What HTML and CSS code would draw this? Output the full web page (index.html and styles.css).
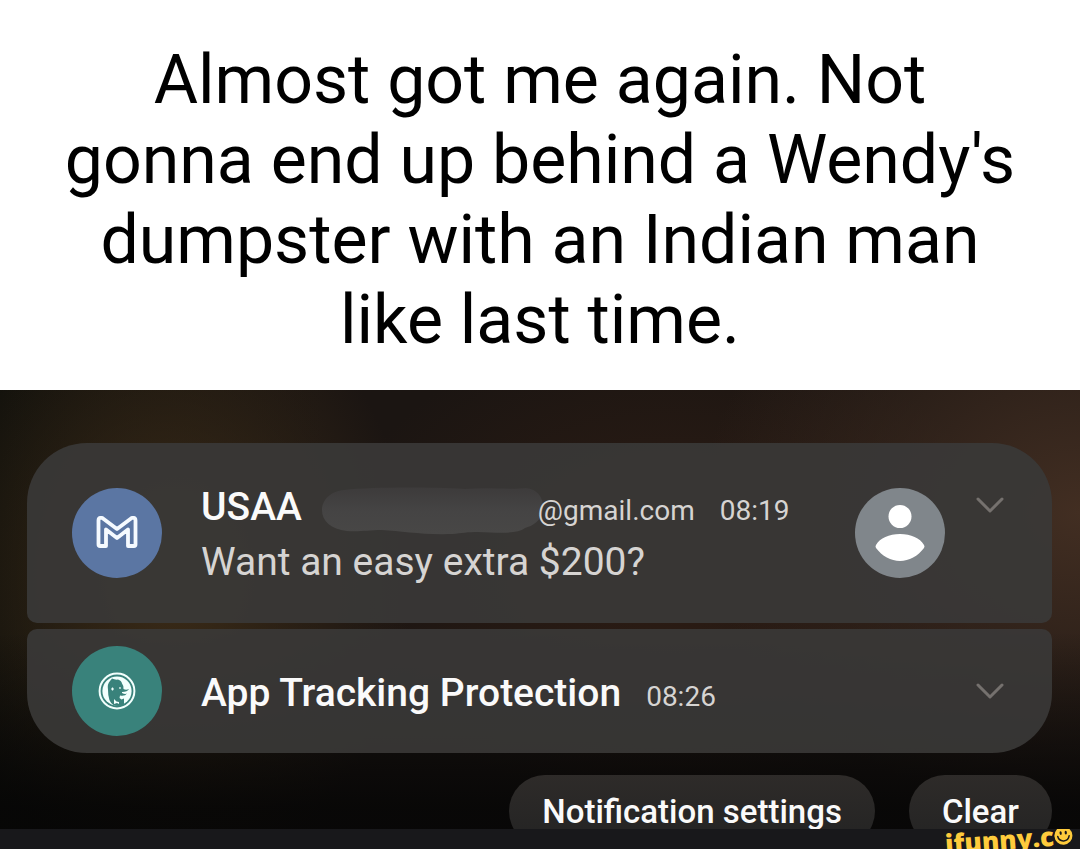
FILE: index.html
```html
<!DOCTYPE html>
<html lang="en">
<head>
  <meta charset="UTF-8">
  <title>Almost got me again</title>
  <link rel="stylesheet" href="styles.css">
</head>
<body>

  <h1 class="caption">Almost got me again. Not gonna end up behind a Wendy's dumpster with an Indian man like last time.</h1>

  <!-- Notification shade -->
  <main class="shade">
    <div class="cards">

      <article class="card">
        <svg class="app-icon" viewBox="0 0 90 90" aria-hidden="true">
          <circle cx="45" cy="45" r="45" fill="#5b76a3"/>
          <path d="M26.500 56.500V32.500Q26.500 30.200 28.200 29.800L30 29.800 45 41 60 29.800 61.800 29.800Q63.500 30.200 63.500 32.500V56.500Q63.500 58 62 58H56V41.500L45 50 34 41.500V58H28Q26.500 58 26.500 56.500Z" fill="none" stroke="#f5faff" stroke-width="3.800" stroke-linejoin="round"/>
        </svg>
        <div class="content">
          <div class="line">
            <h2 class="title">USAA</h2>
            <svg class="smear" viewBox="0 0 222 48" aria-hidden="true">
              <defs>
                <linearGradient id="smear-fill" x1="0" y1="0" x2="0" y2="1">
                  <stop offset="0" stop-color="#3d3b3b"/>
                  <stop offset="0.5" stop-color="#454444"/>
                  <stop offset="1" stop-color="#484746"/>
                </linearGradient>
              </defs>
              <path d="M22 3C50 0 105 0 143 2C165 0 188 3 204 1C216 2 222 12 221 22C220 34 210 39 203 41C195 47 180 46 156 45C145 45 140 46 130 47C100 48 80 44 60 43C45 43 38 45 25 44C9 42 0 34 0 23C0 12 10 4 22 3Z" fill="url(#smear-fill)"/>
            </svg>
            <span class="meta">@gmail.com</span>
            <time class="meta time">08:19</time>
          </div>
          <p class="message">Want an easy extra $200?</p>
        </div>
        <svg class="avatar" viewBox="0 0 90 90" aria-hidden="true">
          <circle cx="45" cy="45" r="45" fill="#80868b"/>
          <circle cx="45" cy="28.500" r="11.500" fill="#fff"/>
          <path d="M21 57C25 50 34 46 45 46S65 50 69 57Q70 58.500 69 60C63 68 54 73 45 73S27 68 21 60Q20 58.500 21 57Z" fill="#fff"/>
        </svg>
        <button class="expand" aria-label="Expand">
          <svg viewBox="0 0 28 16" aria-hidden="true"><path d="M2 2L14 14 26 2"/></svg>
        </button>
      </article>

      <article class="card">
        <svg class="app-icon" viewBox="0 0 90 90" aria-hidden="true">
          <circle cx="45" cy="45" r="45" fill="#39827b"/>
          <circle cx="45" cy="45" r="17.400" fill="none" stroke="#f2fffd" stroke-width="2"/>
          <circle cx="45" cy="45" r="14.600" fill="#f2fffd"/>
          <path d="M38 35L40 32.500Q43 34 46 33.500Q49.500 34.500 50 37.500Q52 40 51.500 43Q54 44.500 57 43Q55.500 45.800 50 46L50 47Q53 48.500 55 47.500Q53 50.500 48 49.500L47.500 52L49.500 53.500 52 52.500V59Q46 61 41.500 59Q36 56 36 44Q35 38 38 35Z" fill="#39827b"/>
          <path d="M40.500 41.500V44.500M39 43H42M48 41V43" stroke="#f2fffd" stroke-width="1.200"/>
          <path d="M42 53V58L45 57 47 58V56L44.500 55.500Z" fill="#f2fffd"/>
        </svg>
        <div class="content">
          <div class="line">
            <h2 class="title">App Tracking Protection</h2>
            <time class="meta time">08:26</time>
          </div>
        </div>
        <button class="expand" aria-label="Expand">
          <svg viewBox="0 0 28 16" aria-hidden="true"><path d="M2 2L14 14 26 2"/></svg>
        </button>
      </article>

    </div>

    <div class="actions">
      <button class="chip">Notification settings</button>
      <button class="chip">Clear</button>
    </div>
  </main>

  <footer class="footer">
    <span class="watermark">ifunny.c<svg viewBox="0 0 20 20" aria-hidden="true">
      <circle cx="10" cy="10" r="9.500" fill="#fecb3c"/>
      <ellipse cx="7.300" cy="7" rx="1.200" ry="2" fill="#18181b"/>
      <ellipse cx="12.700" cy="7" rx="1.200" ry="2" fill="#18181b"/>
      <path d="M4 10.500Q5 15.500 10 15.500T16 10.500" fill="none" stroke="#18181b" stroke-width="1.600" stroke-linecap="round"/>
    </svg></span>
  </footer>

</body>
</html>
```

FILE: styles.css
```css
* { box-sizing: border-box; }
body { margin: 0; height: 100vh; display: flex; flex-direction: column; overflow: hidden; background: #fff; font-family: Roboto, "Liberation Sans", sans-serif; }
h1, h2, p { margin: 0; font-weight: 400; }
button { border: none; padding: 0; font-family: inherit; cursor: pointer; }

.caption { padding: 40px 60px 30px; font-size: 68px; line-height: 80px; text-align: center; color: #000; }

/* Blurred wallpaper behind the notifications */
.shade {
  flex: 1;
  min-height: 0;
  overflow: hidden;
  padding: 53px 28px 0 27px;
  background:
    linear-gradient(to bottom, rgba(5,5,5,0) 55%, rgba(5,5,5,0.85) 95%),
    radial-gradient(ellipse 240px 300px at 16% 42%, #3c2c18, rgba(60,44,24,0)),
    radial-gradient(ellipse 380px 300px at 100% 28%, #422e22, rgba(66,46,34,0)),
    radial-gradient(ellipse 340px 240px at 62% 40%, #2e1d14, rgba(46,29,20,0)),
    linear-gradient(to right, #12110c, #1b1512 30%);
}

.cards { display: flex; flex-direction: column; gap: 6px; }
.card { display: flex; align-items: center; padding: 17px 48px 17px 45px; background: rgba(57,56,55,0.92); border-radius: 10px; }
.card:first-child { padding-top: 38px; padding-bottom: 38px; border-radius: 60px 60px 10px 10px; }
.card:last-child { border-radius: 10px 10px 60px 60px; }
.app-icon, .avatar { flex: none; width: 90px; height: 90px; }

.content { flex: 1; min-width: 0; padding: 4px 0 0 39px; }
.line { display: flex; align-items: baseline; height: 44px; white-space: nowrap; }
.title { font-size: 39px; line-height: 44px; font-weight: 500; color: #fafafa; }
.meta { font-size: 28px; line-height: 36px; color: #d6d4d2; }
.time { margin-left: 25px; }
.message { margin-top: 10px; font-size: 39px; line-height: 46px; color: #d6d4d2; }
.smear { flex: none; align-self: flex-start; width: 222px; height: 48px; margin: 2px -6px 0 20px; }
.smear + .meta { position: relative; }

.expand { flex: none; width: 28px; margin-left: 31px; background: none; }
.card:first-child .expand { align-self: flex-start; padding-top: 16px; }
.expand svg { display: block; width: 28px; height: 16px; fill: none; stroke: #75716e; stroke-width: 3; stroke-linecap: round; stroke-linejoin: round; }

.actions { display: flex; justify-content: flex-end; gap: 34px; padding-top: 22px; }
.chip { flex: none; height: 72px; padding: 0 33px; border-radius: 36px; background: linear-gradient(#2e2b29, #232323); font-size: 33px; font-weight: 500; color: #fafafa; white-space: nowrap; }

.footer { flex: none; display: flex; justify-content: flex-end; height: 20px; padding-right: 7px; overflow: hidden; background: #18181b; }
.watermark { display: flex; align-items: center; height: 20px; font: 800 26px/20px "Open Sans", sans-serif; color: #fecb3c; transform: rotate(-4deg); }
.watermark svg { width: 19px; height: 19px; }
```
